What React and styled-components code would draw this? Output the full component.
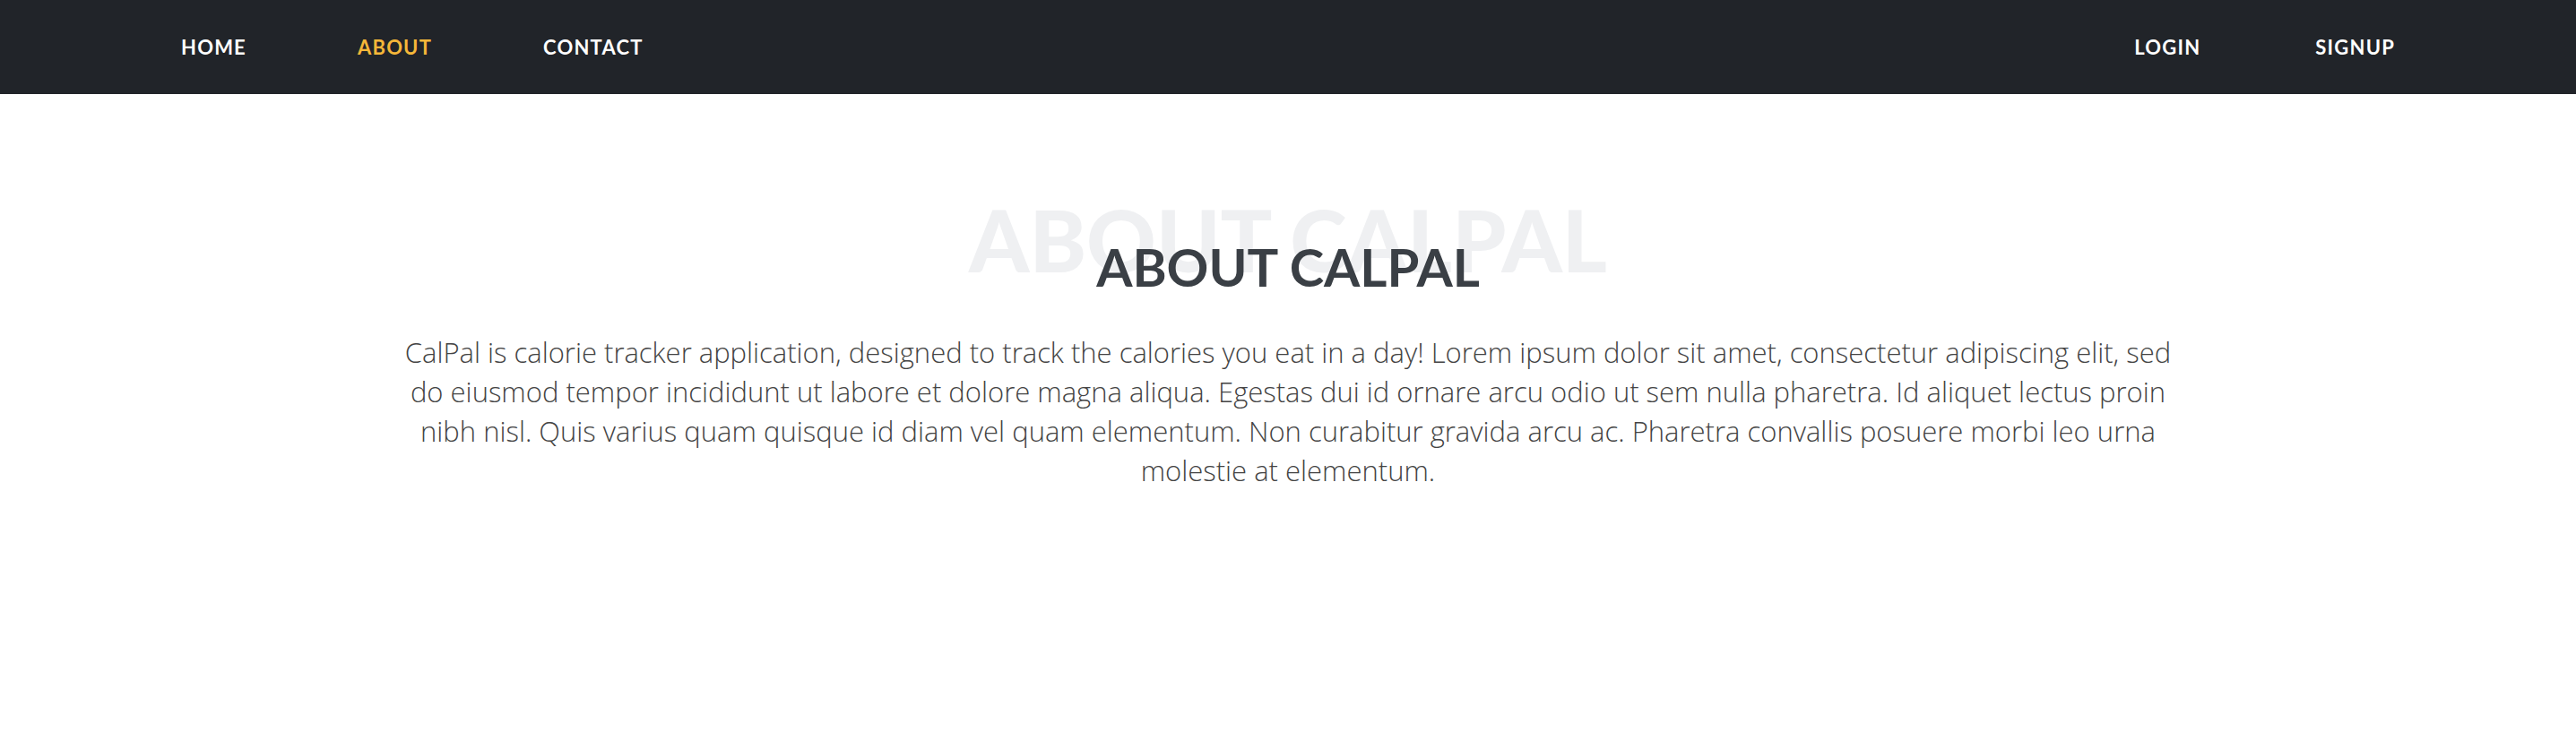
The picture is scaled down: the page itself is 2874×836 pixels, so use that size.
import React from 'react';
import styled, { createGlobalStyle } from 'styled-components';

const GlobalStyle = createGlobalStyle`
  body {
    margin: 0;
    padding: 0;
    background: #ffffff;
    font-family: 'Open Sans', 'Liberation Sans', sans-serif;
  }
`;

const NavBar = styled.nav`
  height: 105px;
  background: #212429;
  display: flex;
  align-items: center;
  justify-content: space-between;
  padding: 0 202px;
  box-sizing: border-box;
`;

const NavGroup = styled.div`
  display: flex;
  align-items: center;
  gap: ${(p) => p.$gap}px;
`;

const NavLink = styled.a`
  font-family: 'Lato', 'Liberation Sans', sans-serif;
  font-weight: 700;
  font-size: 22px;
  letter-spacing: 1.2px;
  text-transform: uppercase;
  text-decoration: none;
  color: ${(p) => (p.$active ? '#f5b739' : '#ffffff')};
  cursor: pointer;
`;

const AboutSection = styled.section`
  display: flex;
  flex-direction: column;
  align-items: center;
  padding-top: 114px;
`;

const TitleWrap = styled.div`
  position: relative;
  display: flex;
  justify-content: center;
  height: 152px;
  width: 100%;
`;

// big faded text sitting behind the heading
const Watermark = styled.span`
  position: absolute;
  top: 0;
  left: 50%;
  transform: translateX(-50%);
  white-space: nowrap;
  font-family: 'Lato', 'Liberation Sans', sans-serif;
  font-weight: 900;
  font-size: 96px;
  line-height: 1;
  color: #eff0f2;
`;

const Heading = styled.h1`
  position: relative;
  margin: 50px 0 0;
  font-family: 'Lato', 'Liberation Sans', sans-serif;
  font-weight: 700;
  font-size: 58px;
  line-height: 1;
  color: #3a3f45;
`;

const Description = styled.p`
  margin: 0;
  max-width: 2200px;
  text-align: center;
  font-family: 'Open Sans', 'Liberation Sans', sans-serif;
  font-weight: 300;
  font-size: 31px;
  line-height: 44px;
  color: #444444;
`;

function App() {
  return (
    <>
      <GlobalStyle />
      <NavBar>
        <NavGroup $gap={124}>
          <NavLink href="#">Home</NavLink>
          <NavLink href="#" $active>About</NavLink>
          <NavLink href="#">Contact</NavLink>
        </NavGroup>
        <NavGroup $gap={128}>
          <NavLink href="#">Login</NavLink>
          <NavLink href="#">Signup</NavLink>
        </NavGroup>
      </NavBar>
      <AboutSection>
        <TitleWrap>
          <Watermark>ABOUT CALPAL</Watermark>
          <Heading>ABOUT CALPAL</Heading>
        </TitleWrap>
        <Description>
          CalPal is calorie tracker application, designed to track the calories you eat in a day! Lorem ipsum dolor sit amet, consectetur adipiscing elit, sed <br />
          do eiusmod tempor incididunt ut labore et dolore magna aliqua. Egestas dui id ornare arcu odio ut sem nulla pharetra. Id aliquet lectus proin <br />
          nibh nisl. Quis varius quam quisque id diam vel quam elementum. Non curabitur gravida arcu ac. Pharetra convallis posuere morbi leo urna <br />
          molestie at elementum.
        </Description>
      </AboutSection>
    </>
  );
}

export default App;
